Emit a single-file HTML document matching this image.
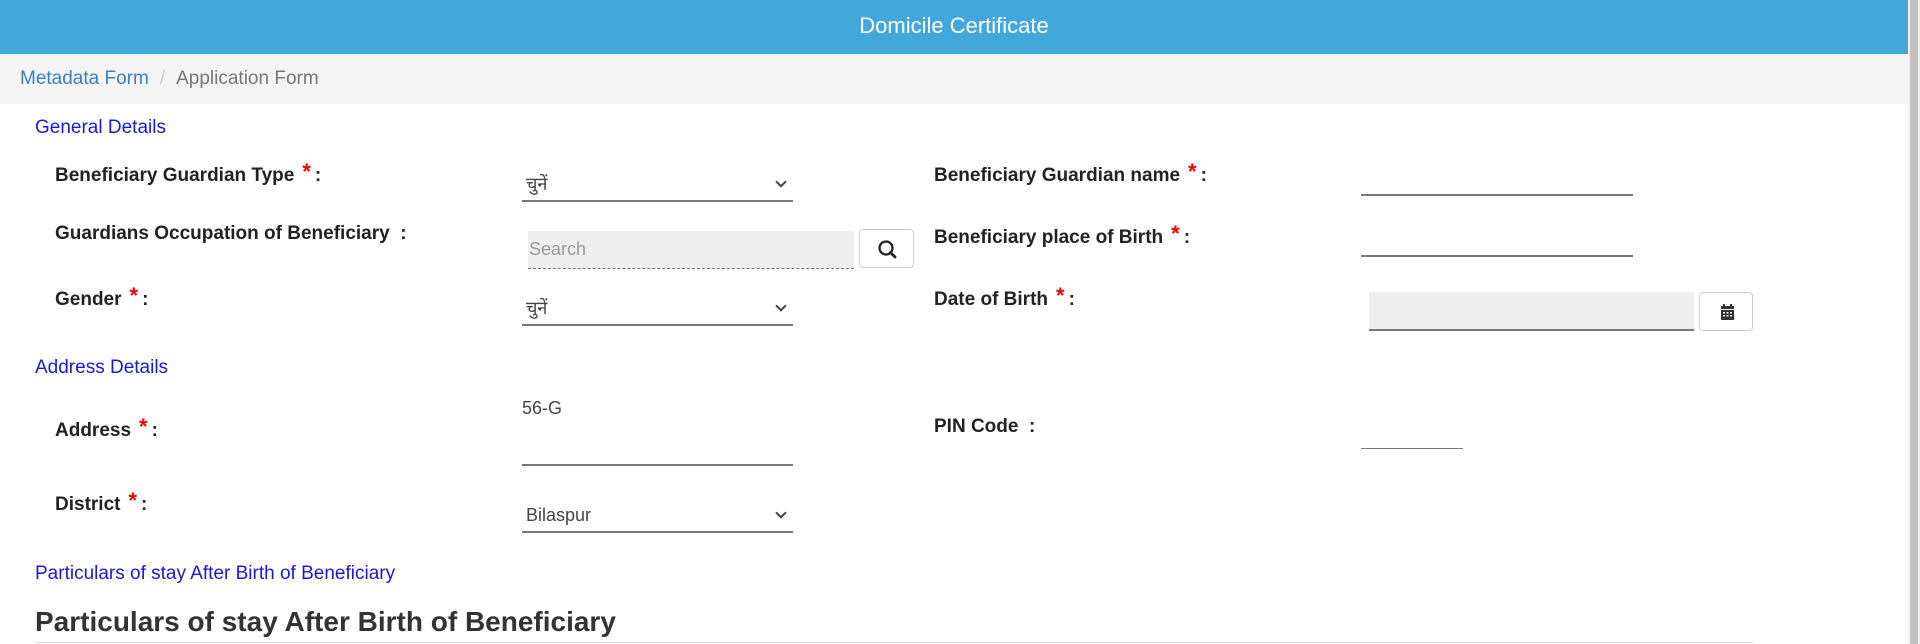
<!DOCTYPE html>
<html><head><meta charset="utf-8"><style>
*{box-sizing:border-box;margin:0;padding:0}
body{width:1920px;height:644px;overflow:hidden;background:#fff;font-family:"Liberation Sans",Arial,sans-serif;position:relative;color:#333}
.a{position:absolute;white-space:nowrap}
.hdr{left:0;top:0;width:1908px;height:54px;background:#42a8dc;color:#fff;font-size:22px;text-align:center;line-height:52px}
.bc{left:0;top:54px;width:1908px;height:50px;background:#f4f4f4;font-size:19px;line-height:50px;padding-left:20px;color:#777}
.bc span.l{color:#3a7fc1}
.sb{left:1908px;top:0;width:12px;height:644px;background:#f1f1f1}
.sbt{left:1910px;top:0;width:8px;height:644px;background:#c1c1c1}
.sec{color:#1a1acd;font-size:19px;left:35px}
.lb{font-weight:bold;font-size:19px;color:#222;left:55px}
.lb2{font-weight:bold;font-size:19px;color:#222;left:934px}
.st{color:#e00;font-size:22px;margin:0 4px 0 8px;position:relative;top:-2px}
.ul{height:2px;background:#777}
.sel{font-size:18px;color:#444;left:522px;width:271px;border-bottom:2px solid #777;height:32px;line-height:28px;padding-left:4px;font-family:"Liberation Sans","Noto Sans CJK SC",sans-serif}
.chev{position:absolute;right:8px;top:8px;width:8px;height:8px;border-right:2px solid #444;border-bottom:2px solid #444;transform:rotate(45deg)}
.btn{border:1px solid #ccc;border-radius:4px;background:#fff}
</style></head><body>
<div class="a hdr">Domicile Certificate</div>
<div class="a bc"><span class="l">Metadata Form</span><span style="color:#ccc;margin:0 11px">/</span>Application Form</div>
<div class="a sb"></div><div class="a sbt"></div>

<div class="a sec" style="top:117px">General Details</div>

<div class="a lb" style="top:161px">Beneficiary Guardian Type<span class="st">*</span>:</div>
<div class="a sel" style="top:170px">चुनें<span class="chev"></span></div>
<div class="a lb2" style="top:161px">Beneficiary Guardian name<span class="st">*</span>:</div>
<div class="a ul" style="left:1361px;top:194px;width:272px"></div>

<div class="a lb" style="top:223px">Guardians Occupation of Beneficiary&nbsp; :</div>
<div class="a" style="left:528px;top:231px;width:326px;height:38px;background:#eee;border-bottom:1px dashed #777;font-size:18px;color:#999;padding:8px 1px">Search</div>
<div class="a btn" style="left:859px;top:229px;width:55px;height:39px">
<svg width="55" height="39" viewBox="0 0 55 39"><circle cx="26" cy="18" r="6.5" fill="none" stroke="#222" stroke-width="2.3"/><line x1="30.5" y1="22.5" x2="35" y2="27" stroke="#222" stroke-width="2.8" stroke-linecap="round"/></svg></div>
<div class="a lb2" style="top:223px">Beneficiary place of Birth<span class="st">*</span>:</div>
<div class="a ul" style="left:1361px;top:255px;width:272px"></div>

<div class="a lb" style="top:285px">Gender<span class="st">*</span>:</div>
<div class="a sel" style="top:294px">चुनें<span class="chev"></span></div>
<div class="a lb2" style="top:285px">Date of Birth<span class="st">*</span>:</div>
<div class="a" style="left:1369px;top:292px;width:325px;height:39px;background:#eee;border-bottom:2px solid #777"></div>
<div class="a btn" style="left:1699px;top:292px;width:54px;height:39px">
<svg width="54" height="39" viewBox="0 0 54 39"><rect x="21" y="13" width="13" height="3" fill="#333"/><rect x="23" y="11" width="2" height="3" fill="#333"/><rect x="30" y="11" width="2" height="3" fill="#333"/><rect x="21" y="17" width="13" height="10" fill="#333"/><g fill="#fff"><rect x="23" y="19" width="2" height="1.5"/><rect x="26.5" y="19" width="2" height="1.5"/><rect x="30" y="19" width="2" height="1.5"/><rect x="23" y="22" width="2" height="1.5"/><rect x="26.5" y="22" width="2" height="1.5"/><rect x="30" y="22" width="2" height="1.5"/></g></svg></div>

<div class="a sec" style="top:357px">Address Details</div>
<div class="a lb" style="top:416px">Address<span class="st">*</span>:</div>
<div class="a" style="left:522px;top:398px;font-size:18px;color:#444">56-G</div>
<div class="a ul" style="left:522px;top:464px;width:271px"></div>
<div class="a lb2" style="top:416px">PIN Code&nbsp; :</div>
<div class="a ul" style="left:1361px;top:448px;width:102px;height:1px"></div>

<div class="a lb" style="top:490px">District<span class="st">*</span>:</div>
<div class="a sel" style="top:501px;font-size:18px">Bilaspur<span class="chev"></span></div>

<div class="a sec" style="top:563px">Particulars of stay After Birth of Beneficiary</div>
<div class="a" style="left:35px;top:606px;font-size:28px;font-weight:bold;color:#333">Particulars of stay After Birth of Beneficiary</div>
<div class="a" style="left:35px;top:642px;width:1718px;height:1px;background:#ddd"></div>
</body></html>
